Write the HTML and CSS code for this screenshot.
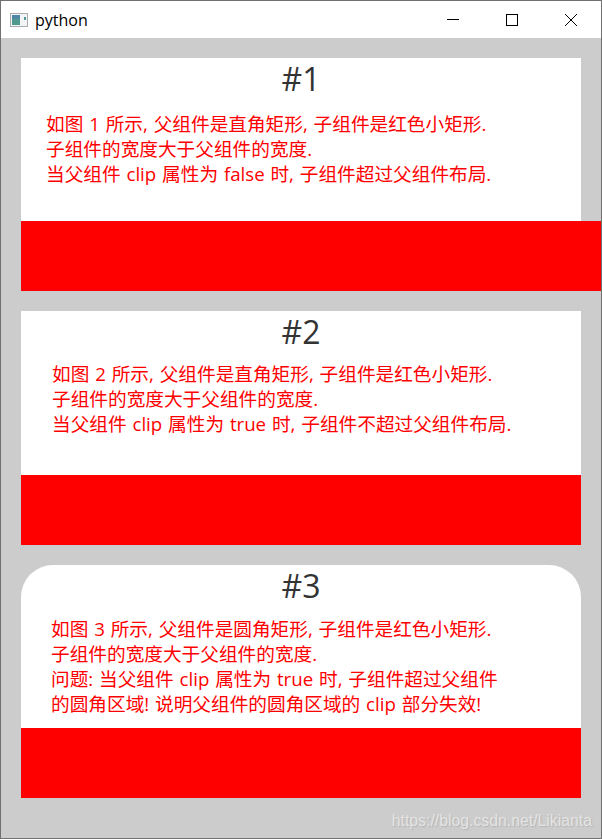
FILE: index.html
```html
<!DOCTYPE html>
<html lang="zh-CN">
<head>
    <meta charset="UTF-8">
    <meta name="viewport" content="width=device-width, initial-scale=1.0">
    <title>python</title>
    <link rel="stylesheet" href="styles.css">
</head>
<body>
    <div class="window">
        <div class="titlebar">
            <svg class="app-icon" width="18" height="16" viewBox="0 0 18 16">
                <rect x="0.5" y="1.5" width="17" height="13" fill="#f2f4f5" stroke="#a9acb0"/>
                <rect x="2" y="3" width="8" height="10" fill="#4f9a8c"/>
                <rect x="2" y="3" width="8" height="4" fill="#4f86a8"/>
                <rect x="14" y="5" width="2" height="3" fill="#4f9a9c"/>
            </svg>
            <span class="window-title">python</span>
            <div class="window-buttons">
                <svg class="window-button" width="14" height="14" viewBox="0 0 14 14">
                    <path d="M1 6.5H13" stroke="#000" fill="none"/>
                </svg>
                <svg class="window-button" width="14" height="14" viewBox="0 0 14 14">
                    <rect x="1.5" y="1.5" width="11" height="11" stroke="#000" fill="none"/>
                </svg>
                <svg class="window-button" width="14" height="14" viewBox="0 0 14 14">
                    <path d="M1 1L13 13M13 1L1 13" stroke="#000" fill="none"/>
                </svg>
            </div>
        </div>

        <div class="content">
            <div class="card">
                <h2 class="card-title">#1</h2>
                <p class="card-text text-first">如图 1 所示, 父组件是直角矩形, 子组件是红色小矩形.<br>子组件的宽度大于父组件的宽度.<br>当父组件 clip 属性为 false 时, 子组件超过父组件布局.</p>
                <div class="red-box red-overflow"></div>
            </div>

            <div class="card">
                <h2 class="card-title">#2</h2>
                <p class="card-text text-second">如图 2 所示, 父组件是直角矩形, 子组件是红色小矩形.<br>子组件的宽度大于父组件的宽度.<br>当父组件 clip 属性为 true 时, 子组件不超过父组件布局.</p>
                <div class="red-box"></div>
            </div>

            <div class="card card-round">
                <h2 class="card-title">#3</h2>
                <p class="card-text text-third">如图 3 所示, 父组件是圆角矩形, 子组件是红色小矩形.<br>子组件的宽度大于父组件的宽度.<br>问题: 当父组件 clip 属性为 true 时, 子组件超过父组件<br>的圆角区域! 说明父组件的圆角区域的 clip 部分失效!</p>
                <div class="red-box"></div>
            </div>
        </div>

        <div class="watermark">https://blog.csdn.net/Likianta</div>
    </div>
</body>
</html>
```

FILE: styles.css
```css
body {
    margin: 0;
    font-family: "Open Sans", "Noto Sans CJK SC", sans-serif;
}
.window {
    position: relative;
    box-sizing: border-box;
    width: 602px;
    height: 839px;
    border: 1px solid #707070;
    background-color: #cccccc;
    overflow: hidden;
}
.titlebar {
    display: flex;
    align-items: center;
    height: 37px;
    background-color: #ffffff;
}
.app-icon {
    margin-left: 9px;
    margin-right: 7px;
}
.window-title {
    font-family: "Open Sans", sans-serif;
    font-size: 16px;
    line-height: 36px;
    color: #000000;
}
.window-buttons {
    display: flex;
    gap: 45px;
    margin-left: auto;
    margin-right: 23px;
}
.content {
    display: flex;
    flex-direction: column;
    gap: 20px;
    padding: 20px 20px 0;
}
.card {
    display: flex;
    flex-direction: column;
    width: 560px;
    height: 233.33px;
    background-color: #ffffff;
}
.card-round {
    border-radius: 32px 32px 0 0;
}
.card-title {
    margin: 0;
    height: 44px;
    line-height: 41px;
    text-align: center;
    font-size: 32px;
    font-weight: normal;
    color: #333333;
}
.card-text {
    margin: 0;
    font-size: 18.67px;
    line-height: 25px;
    word-spacing: 1px;
    color: #ff0000;
}
.text-first {
    padding: 9px 0 0 25px;
}
.text-second {
    padding: 6px 0 0 31px;
}
.text-third {
    padding: 7px 0 0 30px;
}
.red-box {
    margin-top: auto;
    width: 560px;
    height: 70px;
    flex-shrink: 0;
    background-color: #ff0000;
}
.red-overflow {
    width: 600px;
}
.watermark {
    position: absolute;
    right: 9px;
    bottom: 8px;
    font-family: "Liberation Sans", sans-serif;
    font-size: 15.8px;
    color: #e4e4e4;
    text-shadow: 1px 1px 1px #b4b4b4;
}
```
